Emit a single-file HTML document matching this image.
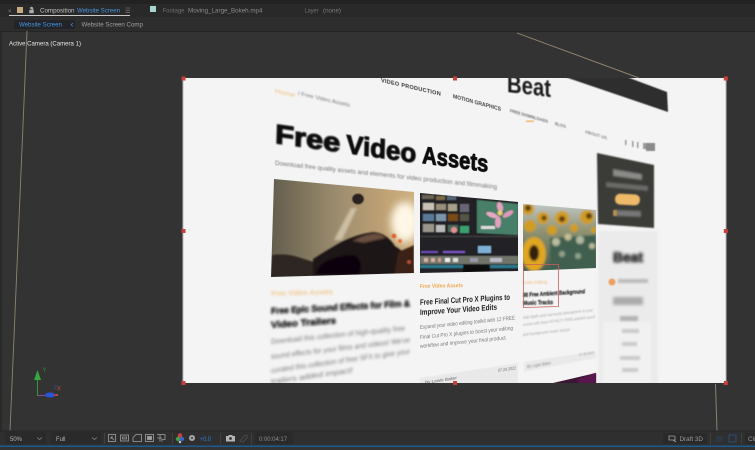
<!DOCTYPE html>
<html><head><meta charset="utf-8">
<style>
html,body{margin:0;padding:0;width:755px;height:450px;overflow:hidden;background:#333}
svg{display:block}
text{font-family:"Liberation Sans",sans-serif}
</style></head><body>
<svg width="755" height="450" viewBox="0 0 755 450" xmlns="http://www.w3.org/2000/svg">
<defs>
<filter id="b05" x="-10%" y="-30%" width="120%" height="160%"><feGaussianBlur stdDeviation="0.5"/></filter>
<filter id="b08" x="-10%" y="-40%" width="120%" height="180%"><feGaussianBlur stdDeviation="0.8"/></filter>
<filter id="b1" x="-20%" y="-50%" width="140%" height="200%"><feGaussianBlur stdDeviation="1"/></filter>
<filter id="b12" x="-20%" y="-50%" width="140%" height="200%"><feGaussianBlur stdDeviation="1.2"/></filter>
<filter id="b15" x="-20%" y="-60%" width="140%" height="220%"><feGaussianBlur stdDeviation="1.5"/></filter>
<filter id="b3" x="-40%" y="-40%" width="180%" height="180%"><feGaussianBlur stdDeviation="4"/></filter>
<filter id="t" x="-5%" y="-50%" width="110%" height="200%"><feGaussianBlur stdDeviation="0.3"/></filter>
<linearGradient id="ph1" x1="0" y1="0" x2="1" y2="0"><stop offset="0" stop-color="#625d4c"/><stop offset=".45" stop-color="#9c8c6e"/><stop offset=".8" stop-color="#c2a476"/><stop offset="1" stop-color="#ceb385"/></linearGradient>
<linearGradient id="ph3" x1="0" y1="0" x2="0" y2="1"><stop offset="0" stop-color="#c7cfd0"/><stop offset=".4" stop-color="#929472"/><stop offset="1" stop-color="#3d5a4c"/></linearGradient>
<clipPath id="comp"><rect x="183" y="78" width="543" height="305"/></clipPath>
<clipPath id="c1"><polygon points="274,179 414,192 414,273 271,277"/></clipPath>
<clipPath id="c2"><polygon points="420,193 518,202 518,271 420,273"/></clipPath>
<clipPath id="c3"><polygon points="523,204 596,210 596,268 523,271"/></clipPath>
</defs>

<rect width="755" height="450" fill="#333"/>
<rect x="0" y="31" width="2" height="400" fill="#2a2a2a"/>
<!-- top panels -->
<rect width="755" height="17" fill="#292929"/>
<rect width="755" height="4" fill="#222"/>
<rect y="17" width="755" height="14" fill="#2d2d2d"/>
<rect y="31" width="755" height="1" fill="#242424"/>
<rect x="14" y="20" width="61" height="9" fill="#222429"/>
<rect x="9" y="15" width="121" height="1" fill="#c9c9c9"/>
<text x="8" y="13" font-size="6" fill="#8a8a8a" filter="url(#t)">×</text>
<rect x="17" y="7" width="6" height="6" fill="#c8aa80"/>
<path d="M30 8.500a1.500 1.500 0 0 1 3 0V10M29.500 10h4v3h-4z" fill="#aaa" stroke="#aaa" stroke-width=".5" filter="url(#t)"/>
<text x="40" y="12.500" font-size="6.500" fill="#c4c4c4" filter="url(#t)" textLength="34.500" lengthAdjust="spacingAndGlyphs">Composition</text>
<text x="77" y="12.500" font-size="6.500" fill="#4597e4" filter="url(#t)" textLength="43" lengthAdjust="spacingAndGlyphs">Website Screen</text>
<path d="M125.500 8h4.500M125.500 10.200h4.500M125.500 12.400h4.500" stroke="#8a8a8a" stroke-width=".6"/>
<rect x="150" y="6" width="6" height="6" fill="#a9d4cf"/>
<text x="162.500" y="12.500" font-size="6.500" fill="#6e6e6e" filter="url(#t)" textLength="22" lengthAdjust="spacingAndGlyphs">Footage</text>
<text x="188" y="12.500" font-size="6.500" fill="#8a8a8a" filter="url(#t)" textLength="74.500" lengthAdjust="spacingAndGlyphs">Moving_Large_Bokeh.mp4</text>
<text x="304.500" y="12.500" font-size="6.500" fill="#6e6e6e" filter="url(#t)" textLength="14" lengthAdjust="spacingAndGlyphs">Layer</text>
<text x="323" y="12.500" font-size="6.500" fill="#7c7c7c" filter="url(#t)" textLength="18" lengthAdjust="spacingAndGlyphs">(none)</text>
<text x="19" y="26.700" font-size="6.500" fill="#4597e4" filter="url(#t)" textLength="43" lengthAdjust="spacingAndGlyphs">Website Screen</text>
<path d="M73 23l-2 1.700 2 1.700" stroke="#4a8fd0" stroke-width=".7" fill="none"/>
<text x="81.500" y="26.700" font-size="6.500" fill="#a0a0a0" filter="url(#t)" textLength="61.500" lengthAdjust="spacingAndGlyphs">Website Screen Comp</text>
<text x="9" y="45.300" font-size="6.500" fill="#e6e6e6" filter="url(#t)" textLength="72" lengthAdjust="spacingAndGlyphs">Active Camera (Camera 1)</text>

<!-- comp -->
<g clip-path="url(#comp)">
<rect x="183" y="78" width="543" height="305" fill="#f4f4f4"/>
<!-- header -->
<text transform="matrix(1 .23 0 1 381 82)" font-size="5.500" font-weight="bold" letter-spacing=".3" fill="#333" filter="url(#t)" textLength="60" lengthAdjust="spacingAndGlyphs">VIDEO PRODUCTION</text>
<text transform="matrix(1 .27 0 1 453 98)" font-size="5" font-weight="bold" fill="#444" filter="url(#t)" textLength="48" lengthAdjust="spacingAndGlyphs">MOTION GRAPHICS</text>
<text transform="matrix(1 .29 0 1 510 112)" font-size="4.500" font-weight="bold" fill="#666" filter="url(#b05)" textLength="38" lengthAdjust="spacingAndGlyphs">FREE DOWNLOADS</text>
<text transform="matrix(1 .27 0 1 555 125)" font-size="4.500" font-weight="bold" fill="#777" filter="url(#b05)" textLength="11" lengthAdjust="spacingAndGlyphs">BLOG</text>
<text transform="matrix(1 .3 0 1 585 133)" font-size="4.500" font-weight="bold" fill="#888" filter="url(#b05)" textLength="22" lengthAdjust="spacingAndGlyphs">ABOUT US</text>
<rect x="526" y="120.500" width="8" height="1.500" fill="#f0b060" filter="url(#b05)"/>
<text transform="matrix(1 .12 0 1 507 92)" font-size="25" font-weight="bold" fill="#1c1c1c" filter="url(#b05)" textLength="44" lengthAdjust="spacingAndGlyphs">Beat</text>
<polygon points="565,77 627,77 667,92 668,112" fill="#2e2e2e" filter="url(#b05)"/>
<g filter="url(#b05)" fill="#999"><rect x="625" y="140" width="1.500" height="5"/><rect x="632" y="141" width="1.500" height="6"/><rect x="637" y="142" width="1.500" height="6"/><rect x="643" y="143" width="3" height="6"/><rect x="646" y="143" width="9" height="8" fill="#8a8a8a"/></g>
<!-- breadcrumb -->
<text transform="matrix(1 .22 0 1 275 93)" font-size="6" fill="#f0c080" filter="url(#b08)" textLength="20" lengthAdjust="spacingAndGlyphs">Home</text>
<text transform="matrix(1 .23 0 1 298 95)" font-size="5.600" fill="#777" filter="url(#b08)" textLength="52" lengthAdjust="spacingAndGlyphs">/ Free Video Assets</text>
<!-- title -->
<g font-weight="bold" fill="#0c0c0c" stroke="#0c0c0c">
<text transform="matrix(1 .14 -.03 1 275 143)" font-size="27" stroke-width="1.200" filter="url(#b08)" textLength="65" lengthAdjust="spacingAndGlyphs">Free</text>
<text transform="matrix(1 .14 -.03 1 346 153)" font-size="26" stroke-width="1" filter="url(#b05)" textLength="70" lengthAdjust="spacingAndGlyphs">Video</text>
<text transform="matrix(1 .14 -.03 1 422 163)" font-size="24" stroke-width=".9" filter="url(#t)" textLength="66" lengthAdjust="spacingAndGlyphs">Assets</text>
</g>
<text transform="matrix(1 .108 0 1 275 165)" font-size="6.800" fill="#777" filter="url(#b05)" textLength="222" lengthAdjust="spacingAndGlyphs">Download free quality assets and elements for video production and filmmaking</text>

<!-- photo 1 -->
<g clip-path="url(#c1)" filter="url(#b05)">
<rect x="270" y="175" width="148" height="105" fill="url(#ph1)"/>
<ellipse cx="405" cy="222" rx="14" ry="20" fill="#fff8e6" filter="url(#b3)"/>
<path d="M351 208L357 208 342 240 334 240z" fill="#ded3ba" opacity=".7" filter="url(#b1)"/>
<ellipse cx="358" cy="199" rx="6" ry="5.500" fill="#2a2220" filter="url(#t)"/>
<path d="M272 255q14-2 26 2l16 5v16h-44z" fill="#2e2823" filter="url(#b05)"/>
<path d="M313 259q12-8 28-17q16-8 32-10q14 1 22 14q14 8 19 24v10h-101z" fill="#1e1614" filter="url(#b05)"/>
<path d="M352 241q12-7 24-8q7 1 10 5l-22 5z" fill="#6a5040" filter="url(#b1)"/>
<path d="M316 274q5-17 38-19q10 6 5 19z" fill="#07040c" filter="url(#b1)"/>
<circle cx="394" cy="236" r="2.500" fill="#e06a2c" filter="url(#t)"/>
<circle cx="400" cy="241" r="2" fill="#e8743a" filter="url(#t)"/>
<path d="M398 252l16-7v30h-20z" fill="#3a2018" filter="url(#b05)"/>
<circle cx="409" cy="262" r="2" fill="#b04a30"/>
</g>
<!-- photo 2 -->
<g clip-path="url(#c2)" filter="url(#b05)">
<rect x="415" y="190" width="110" height="85" fill="#242427"/>
<polygon points="477,200 518,204 518,235 477,233" fill="#467f68"/>
<ellipse cx="500" cy="207" rx="3" ry="5" fill="#e5a0be" transform="rotate(-15 500 207)"/>
<ellipse cx="492" cy="215" rx="6" ry="2.500" fill="#e6a8c4" transform="rotate(20 492 215)"/>
<ellipse cx="508" cy="214" rx="6" ry="2.500" fill="#dd98b8" transform="rotate(-30 508 214)"/>
<ellipse cx="498" cy="222" rx="3" ry="6" fill="#e0a0bc"/>
<circle cx="500" cy="213" r="2.500" fill="#e8d070"/>
<rect x="481" y="226" width="14" height="3" fill="#ddd"/>
<rect x="422" y="195" width="12" height="4" fill="#6b6454"/><rect x="436" y="196" width="9" height="4" fill="#7a6a4a"/><rect x="447" y="196" width="9" height="4" fill="#567"/>
<rect x="423" y="203" width="11" height="7" fill="#c8c2b4"/><rect x="436" y="204" width="10" height="6" fill="#9a8f78"/><rect x="448" y="204" width="9" height="7" fill="#a8a088"/><rect x="460" y="204" width="9" height="8" fill="#667"/>
<rect x="423" y="214" width="11" height="7" fill="#5a7a9a"/><rect x="436" y="214" width="10" height="7" fill="#7a95aa"/><rect x="448" y="214" width="10" height="7" fill="#7a4a18"/><rect x="460" y="214" width="9" height="7" fill="#554"/>
<rect x="423" y="224" width="11" height="8" fill="#99958a"/><rect x="436" y="225" width="9" height="7" fill="#bbb"/><rect x="448" y="225" width="10" height="7" fill="#4a6a5a"/><rect x="460" y="226" width="9" height="7" fill="#3aa070"/>
<circle cx="454" cy="230" r="3" fill="#e59090"/>
<rect x="420" y="236" width="98" height="1" fill="#444"/>
<rect x="478" y="246" width="13" height="7" fill="#7fb0d8"/>
<rect x="421" y="251" width="17" height="2" fill="#6a4ab0"/><rect x="443" y="251" width="22" height="2" fill="#7a55c0"/>
<rect x="420" y="256" width="98" height="8" fill="#6f7569"/>
<rect x="424" y="258" width="4" height="4" fill="#d8b0a0"/><rect x="431" y="258" width="4" height="4" fill="#d8b0a0"/><rect x="438" y="258" width="3" height="4" fill="#cfa090"/>
<rect x="445" y="258" width="5" height="4" fill="#eee"/><rect x="453" y="258" width="5" height="4" fill="#ddd"/><rect x="470" y="258" width="8" height="4" fill="#99a"/><rect x="490" y="258" width="12" height="4" fill="#bbc"/>
<rect x="420" y="265" width="98" height="3" fill="#2a7a90"/>
<rect x="463" y="265" width="27" height="8" fill="#111"/>
</g>
<!-- photo 3 -->
<g clip-path="url(#c3)" filter="url(#b1)">
<rect x="520" y="200" width="80" height="75" fill="url(#ph3)"/>
<g fill="#d09c24">
<circle cx="528" cy="209" r="6"/><circle cx="543" cy="218" r="6"/><circle cx="562" cy="218" r="7"/><circle cx="587" cy="217" r="7"/><circle cx="530" cy="226" r="6"/><circle cx="552" cy="230" r="5"/><circle cx="574" cy="228" r="4"/><circle cx="594" cy="230" r="3"/>
</g>
<g fill="#5a3a14">
<circle cx="528" cy="208" r="3"/><circle cx="544" cy="218" r="2.500"/><circle cx="562" cy="219" r="3"/><circle cx="589" cy="216" r="3"/>
</g>
<path d="M550 238l46-3v36h-46z" fill="#3f5f50"/>
<circle cx="556" cy="242" r="4" fill="#b8bc9c"/><circle cx="568" cy="237" r="3.500" fill="#c4bd94"/><circle cx="580" cy="240" r="4" fill="#adb89f"/><circle cx="592" cy="246" r="3" fill="#b8ba9c"/><circle cx="562" cy="254" r="3" fill="#93a288"/><circle cx="578" cy="256" r="3" fill="#8fa087"/>
<ellipse cx="534" cy="254" rx="12" ry="17" fill="#dfa620"/>
<ellipse cx="534" cy="253" rx="5" ry="8" fill="#33230f"/>
</g>

<!-- col 1 text -->
<text transform="matrix(1 -.03 0 1 271 296)" font-size="7" font-weight="bold" fill="#f1c990" filter="url(#b1)" textLength="62" lengthAdjust="spacingAndGlyphs">Free Video Assets</text>
<g filter="url(#b12)">
<text transform="matrix(1 -.055 0 1 271 314)" font-size="9" font-weight="bold" fill="#111" stroke="#111" stroke-width=".4" textLength="139" lengthAdjust="spacingAndGlyphs">Free Epic Sound Effects for Film &amp;</text>
<text transform="matrix(1 -.07 0 1 271 328)" font-size="9" font-weight="bold" fill="#111" stroke="#111" stroke-width=".4" textLength="65" lengthAdjust="spacingAndGlyphs">Video Trailers</text>
<g font-size="7.500" fill="#777">
<text transform="matrix(1 -.1 0 1 271 344)" textLength="134" lengthAdjust="spacingAndGlyphs">Download this collection of high-quality free</text>
<text transform="matrix(1 -.12 0 1 271 359)" textLength="139" lengthAdjust="spacingAndGlyphs">sound effects for your films and videos! We've</text>
<text transform="matrix(1 -.14 0 1 271 373)" textLength="139" lengthAdjust="spacingAndGlyphs">curated this collection of free SFX to give your</text>
<text transform="matrix(1 -.14 0 1 271 384)" textLength="82" lengthAdjust="spacingAndGlyphs">trailers added impact!</text>
</g>
</g>
<!-- col 2 text -->
<text transform="matrix(1 -.02 0 1 420 288)" font-size="5.500" font-weight="bold" fill="#eda74e" filter="url(#t)" textLength="43" lengthAdjust="spacingAndGlyphs">Free Video Assets</text>
<g filter="url(#t)">
<text transform="matrix(1 -.06 0 1 420 305)" font-size="8" font-weight="bold" fill="#1e1e1e" textLength="90" lengthAdjust="spacingAndGlyphs">Free Final Cut Pro X Plugins to</text>
<text transform="matrix(1 -.07 0 1 420 315)" font-size="8" font-weight="bold" fill="#1e1e1e" textLength="77" lengthAdjust="spacingAndGlyphs">Improve Your Video Edits</text>
<g font-size="5.500" fill="#7a7a7a">
<text transform="matrix(1 -.1 0 1 420 329)" textLength="95" lengthAdjust="spacingAndGlyphs">Expand your video editing toolkit with 12 FREE</text>
<text transform="matrix(1 -.1 0 1 420 339)" textLength="93" lengthAdjust="spacingAndGlyphs">Final Cut Pro X plugins to boost your editing</text>
<text transform="matrix(1 -.1 0 1 420 348)" textLength="87" lengthAdjust="spacingAndGlyphs">workflow and improve your final product.</text>
</g>
</g>
<polygon points="420,378 518,363 518,383 420,392" fill="#e9e9e9" filter="url(#b05)"/>
<text transform="matrix(1 -.15 0 1 425 384)" font-size="4.800" fill="#666" filter="url(#t)" textLength="32" lengthAdjust="spacingAndGlyphs">By Lewis Baker</text>
<text transform="matrix(1 -.15 0 1 498 372)" font-size="4.500" fill="#777" filter="url(#t)" textLength="18" lengthAdjust="spacingAndGlyphs">07.29.2022</text>
<!-- col 3 text -->
<text transform="matrix(1 -.02 0 1 523 284)" font-size="4.500" fill="#f0b878" filter="url(#b05)" textLength="24" lengthAdjust="spacingAndGlyphs">Audio Editing</text>
<g filter="url(#b05)">
<text transform="matrix(1 -.06 0 1 523 297)" font-size="6" font-weight="bold" fill="#222" stroke="#222" stroke-width=".2" textLength="62" lengthAdjust="spacingAndGlyphs">98 Free Ambient Background</text>
<text transform="matrix(1 -.03 0 1 523 305)" font-size="6" font-weight="bold" fill="#222" stroke="#222" stroke-width=".2" textLength="30" lengthAdjust="spacingAndGlyphs">Music Tracks</text>
<g font-size="4.300" fill="#aaa">
<text transform="matrix(1 -.11 0 1 523 319)" textLength="70" lengthAdjust="spacingAndGlyphs">Add depth and real-world atmosphere to your</text>
<text transform="matrix(1 -.11 0 1 523 326)" textLength="72" lengthAdjust="spacingAndGlyphs">scenes with these ROYALTY FREE ambient sound</text>
<text transform="matrix(1 -.11 0 1 523 336)" textLength="47" lengthAdjust="spacingAndGlyphs">and background music tracks!</text>
</g>
</g>
<polygon points="524,362 596,351 596,358 524,372" fill="#e9e9e9" filter="url(#b05)"/>
<text transform="matrix(1 -.15 0 1 527 368)" font-size="4.500" fill="#888" filter="url(#b05)" textLength="24" lengthAdjust="spacingAndGlyphs">By Logan Baker</text>
<text transform="matrix(1 -.15 0 1 579 356)" font-size="4" fill="#999" filter="url(#b05)" textLength="15" lengthAdjust="spacingAndGlyphs">07.26.2022</text>
<polygon points="553,383 596,373 596,383" fill="#3b1230" filter="url(#t)"/>
<polygon points="578,379 596,373 596,383 578,383" fill="#5a1650" filter="url(#b05)"/>
<!-- red selection -->
<path d="M523.500 264.500L558.500 264.500 558.500 306.500 523.500 307.500z" fill="none" stroke="#c9605a" stroke-width=".8"/>

<!-- sidebar -->
<rect x="598" y="231" width="60" height="160" fill="#ebebeb" filter="url(#b1)"/>
<polygon points="597,153 654,165 654,228 598,224" fill="#3a3a38" filter="url(#b08)"/>
<polygon points="613,169 642,174 642,180 613,176" fill="#8a8a88" filter="url(#b1)"/>
<polygon points="606,182 648,186 648,191 606,187" fill="#6a6a68" filter="url(#b1)"/>
<rect x="615" y="194" width="25" height="11" rx="5" fill="#eeb968" transform="rotate(3 627 199)" filter="url(#b08)"/>
<polygon points="616,210 641,211 641,217 616,216" fill="#777" filter="url(#b1)"/>
<rect x="613" y="210" width="4" height="6" fill="#b9924e" filter="url(#b08)"/>
<text x="613" y="262" font-size="14" font-weight="bold" fill="#1a1a1a" stroke="#1a1a1a" stroke-width=".6" filter="url(#b15)" textLength="30" lengthAdjust="spacingAndGlyphs">Beat</text>
<circle cx="612" cy="282" r="3.500" fill="#f0a060" filter="url(#b05)"/>
<rect x="618" y="279" width="30" height="4" fill="#bbb" filter="url(#b1)"/>
<rect x="613" y="297" width="30" height="8" fill="#aaa" filter="url(#b15)"/>
<rect x="603" y="322" width="48" height="65" fill="#f1f1f1" filter="url(#b1)"/>
<rect x="620" y="316" width="18" height="5" fill="#b4b4b4" filter="url(#b1)"/>
<rect x="622" y="329" width="17" height="4" fill="#cacaca" filter="url(#b1)"/>
<rect x="622" y="342" width="15" height="4" fill="#cacaca" filter="url(#b1)"/>
<rect x="620" y="356" width="20" height="4" fill="#cacaca" filter="url(#b1)"/>
<rect x="622" y="368" width="16" height="4" fill="#cacaca" filter="url(#b1)"/>
</g>
<rect x="182.500" y="78" width="1" height="305" fill="#b9b9b9"/>
<rect x="725.500" y="78" width="1" height="305" fill="#b9b9b9"/>

<!-- guides -->
<path d="M27 31L10 431" stroke="#8f8373" stroke-width=".9" fill="none"/>
<path d="M517 33L639 78" stroke="#9a8b74" stroke-width=".9" fill="none"/>
<path d="M715.500 384L717 431" stroke="#8b8276" stroke-width="1" fill="none"/>

<!-- handles -->
<g fill="#c8403a">
<rect x="181.500" y="76.500" width="4" height="4"/><rect x="453" y="76.500" width="4" height="4"/><rect x="723.800" y="76.500" width="4" height="4"/>
<rect x="181.500" y="229" width="4" height="4"/><rect x="723.800" y="229" width="4" height="4"/>
<rect x="181.500" y="381" width="4" height="4"/><rect x="453" y="381" width="4" height="4"/><rect x="723.800" y="381" width="4" height="4"/>
</g>

<!-- axis -->
<g filter="url(#t)">
<path d="M37.500 396V375" stroke="#2f9a3a" stroke-width="1"/>
<path d="M34 380l3.500-10 3.500 10z" fill="#35a83f"/>
<text x="42.500" y="372" font-size="6" fill="#3d8a3c">Y</text>
<path d="M37.500 395.500H57" stroke="#8a4a9a" stroke-width="1"/>
<ellipse cx="50" cy="395" rx="5" ry="2.500" fill="#2a55d8"/>
<path d="M53 395l5-1 0 2z" fill="#dc4a2a"/>
<text x="57" y="390.500" font-size="6" fill="#d04a38">X</text>
<text x="54" y="389" font-size="5" fill="#3555c0">Z</text>
</g>

<!-- bottom bar -->
<rect y="431" width="755" height="15" fill="#2f2f2f"/>
<rect y="430.500" width="755" height="1" fill="#252525"/>
<rect y="445.500" width="755" height="1.800" fill="#1d5a8f"/>
<rect y="447" width="755" height="3" fill="#333"/>
<rect x="5" y="432" width="41" height="12" fill="#2a2a2a"/>
<text x="10" y="441" font-size="6.500" fill="#b4b4b4" filter="url(#t)" textLength="12" lengthAdjust="spacingAndGlyphs">50%</text>
<path d="M37 437.500l2.500 2 2.500-2" stroke="#8a8a8a" fill="none" stroke-width=".8"/>
<rect x="51" y="432" width="50" height="12" fill="#2a2a2a"/>
<text x="56" y="441" font-size="6.500" fill="#b4b4b4" filter="url(#t)" textLength="9.500" lengthAdjust="spacingAndGlyphs">Full</text>
<path d="M92 437.500l2.500 2 2.500-2" stroke="#8a8a8a" fill="none" stroke-width=".8"/>
<g stroke="#a0a0a0" fill="none" stroke-width=".8" filter="url(#t)">
<rect x="108.500" y="434.500" width="7" height="7"/><path d="M111 437l3 3M111 437h2M111 437v2"/>
<rect x="120.500" y="435" width="8" height="6"/><path d="M122.500 437h4v2h-4z"/>
<path d="M133 441.500v-4l3-3h5.500v7z"/>
<rect x="145.500" y="434.500" width="8" height="7"/><rect x="147.500" y="436.500" width="4" height="3" fill="#a0a0a0"/>
<path d="M157 434.500h8v5h-3v2M160 434.500v7M157 438h5"/>
</g>
<circle cx="180" cy="435.500" r="2.200" fill="#d0403a"/>
<circle cx="178" cy="439" r="2.200" fill="#3fa34a"/>
<circle cx="182" cy="439" r="2.200" fill="#3a62c8"/>
<circle cx="180" cy="442" r="1.200" fill="#ccc"/>
<circle cx="192" cy="438" r="3" fill="#a8a8a8"/><circle cx="192" cy="438" r="1" fill="#333"/>
<text x="200" y="441" font-size="6.300" fill="#2a6fb5" stroke="#2a6fb5" stroke-width=".15" filter="url(#t)" textLength="11" lengthAdjust="spacingAndGlyphs">+0.0</text>
<path d="M226 436h2l1-1h3l1 1h2v5.500h-9z" fill="#b5b5b5"/><circle cx="230.500" cy="438.500" r="1.400" fill="#333"/>
<path d="M240 441l4-5 3-1 0 3-4 4z" fill="none" stroke="#4a4a4a" stroke-width=".9"/>
<rect x="255" y="432" width="38" height="12" fill="#2a2a2a"/>
<text x="259" y="441" font-size="6.300" fill="#8a8a8a" filter="url(#t)" textLength="28" lengthAdjust="spacingAndGlyphs">0:00:04:17</text>
<path d="M104.500 433v11M172.500 433v11M220.500 433v11M251.500 433v11" stroke="#404040"/>
<rect x="663" y="433" width="44" height="11" fill="#2a2a2a"/>
<path d="M669 436h5a1 1 0 0 1 1 1v3h-6zM673 440l3 2" fill="none" stroke="#a0a0a0" stroke-width=".8" filter="url(#t)"/>
<text x="679.500" y="441" font-size="6.300" fill="#9a9a9a" filter="url(#t)" textLength="23.500" lengthAdjust="spacingAndGlyphs">Draft 3D</text>
<path d="M710.500 433v11" stroke="#404040"/>
<path d="M716 437h7M716 439h7M716 441h7" stroke="#2c4a68" stroke-width=".8"/>
<rect x="729" y="435" width="7" height="7" fill="none" stroke="#264f78" stroke-width="1"/>
<path d="M741.500 433v11" stroke="#404040"/>
<rect x="745" y="433" width="10" height="11" fill="#2a2a2a"/>
<text x="748" y="441" font-size="6.500" fill="#9a9a9a" filter="url(#t)">Cli</text>
</svg>
</body></html>
